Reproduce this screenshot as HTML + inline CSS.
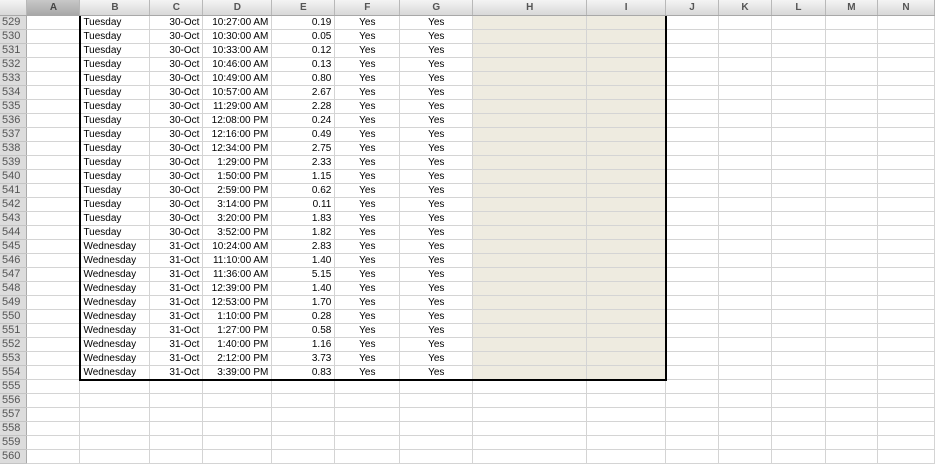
<!DOCTYPE html><html><head><style>
body{margin:0;width:935px;height:461px;overflow:hidden;background:#fff;font-family:"Liberation Sans",sans-serif;font-size:10px;position:relative}
table{border-collapse:collapse;table-layout:fixed;position:absolute;left:0;top:0}
td{height:13px;padding:0 3px;border-right:1px solid #d4d4d4;border-bottom:1px solid #d4d4d4;white-space:nowrap;overflow:hidden;line-height:13px;color:#000}
tr.h td{height:15px;background:linear-gradient(#f4f4f4,#d8d8d8);text-align:center;color:#555;font-weight:bold;border-right:1px solid #b8b8b8;border-bottom:1px solid #a8a8a8}
td.r{background:#dcdcdc;color:#555;font-size:11px;padding:0 2px;border-bottom:1px solid #c4c4c4;border-right:1px solid #aaa}
td:nth-child(4),td:nth-child(5),td:nth-child(6){text-align:right}
td:nth-child(7),td:nth-child(8){text-align:center}
td.s{background:#eeebe0}
#box{position:absolute;left:79px;top:16px;width:584px;height:363px;border:2px solid #000;border-top:none}
</style></head><body>
<table>
<colgroup><col style="width:27px"><col style="width:53px"><col style="width:70px"><col style="width:53px"><col style="width:69px"><col style="width:63px"><col style="width:65px"><col style="width:73px"><col style="width:114px"><col style="width:79px"><col style="width:53px"><col style="width:53px"><col style="width:54px"><col style="width:52px"><col style="width:57px"></colgroup>
<tr class="h"><td></td><td style="background:linear-gradient(#c8c8c8,#a8a8a8);color:#444">A</td><td>B</td><td>C</td><td>D</td><td>E</td><td>F</td><td>G</td><td>H</td><td>I</td><td>J</td><td>K</td><td>L</td><td>M</td><td>N</td></tr>
<tr><td class="r">529</td><td></td><td>Tuesday</td><td>30-Oct</td><td>10:27:00 AM</td><td>0.19</td><td>Yes</td><td>Yes</td><td class="s"></td><td class="s"></td><td></td><td></td><td></td><td></td><td></td></tr>
<tr><td class="r">530</td><td></td><td>Tuesday</td><td>30-Oct</td><td>10:30:00 AM</td><td>0.05</td><td>Yes</td><td>Yes</td><td class="s"></td><td class="s"></td><td></td><td></td><td></td><td></td><td></td></tr>
<tr><td class="r">531</td><td></td><td>Tuesday</td><td>30-Oct</td><td>10:33:00 AM</td><td>0.12</td><td>Yes</td><td>Yes</td><td class="s"></td><td class="s"></td><td></td><td></td><td></td><td></td><td></td></tr>
<tr><td class="r">532</td><td></td><td>Tuesday</td><td>30-Oct</td><td>10:46:00 AM</td><td>0.13</td><td>Yes</td><td>Yes</td><td class="s"></td><td class="s"></td><td></td><td></td><td></td><td></td><td></td></tr>
<tr><td class="r">533</td><td></td><td>Tuesday</td><td>30-Oct</td><td>10:49:00 AM</td><td>0.80</td><td>Yes</td><td>Yes</td><td class="s"></td><td class="s"></td><td></td><td></td><td></td><td></td><td></td></tr>
<tr><td class="r">534</td><td></td><td>Tuesday</td><td>30-Oct</td><td>10:57:00 AM</td><td>2.67</td><td>Yes</td><td>Yes</td><td class="s"></td><td class="s"></td><td></td><td></td><td></td><td></td><td></td></tr>
<tr><td class="r">535</td><td></td><td>Tuesday</td><td>30-Oct</td><td>11:29:00 AM</td><td>2.28</td><td>Yes</td><td>Yes</td><td class="s"></td><td class="s"></td><td></td><td></td><td></td><td></td><td></td></tr>
<tr><td class="r">536</td><td></td><td>Tuesday</td><td>30-Oct</td><td>12:08:00 PM</td><td>0.24</td><td>Yes</td><td>Yes</td><td class="s"></td><td class="s"></td><td></td><td></td><td></td><td></td><td></td></tr>
<tr><td class="r">537</td><td></td><td>Tuesday</td><td>30-Oct</td><td>12:16:00 PM</td><td>0.49</td><td>Yes</td><td>Yes</td><td class="s"></td><td class="s"></td><td></td><td></td><td></td><td></td><td></td></tr>
<tr><td class="r">538</td><td></td><td>Tuesday</td><td>30-Oct</td><td>12:34:00 PM</td><td>2.75</td><td>Yes</td><td>Yes</td><td class="s"></td><td class="s"></td><td></td><td></td><td></td><td></td><td></td></tr>
<tr><td class="r">539</td><td></td><td>Tuesday</td><td>30-Oct</td><td>1:29:00 PM</td><td>2.33</td><td>Yes</td><td>Yes</td><td class="s"></td><td class="s"></td><td></td><td></td><td></td><td></td><td></td></tr>
<tr><td class="r">540</td><td></td><td>Tuesday</td><td>30-Oct</td><td>1:50:00 PM</td><td>1.15</td><td>Yes</td><td>Yes</td><td class="s"></td><td class="s"></td><td></td><td></td><td></td><td></td><td></td></tr>
<tr><td class="r">541</td><td></td><td>Tuesday</td><td>30-Oct</td><td>2:59:00 PM</td><td>0.62</td><td>Yes</td><td>Yes</td><td class="s"></td><td class="s"></td><td></td><td></td><td></td><td></td><td></td></tr>
<tr><td class="r">542</td><td></td><td>Tuesday</td><td>30-Oct</td><td>3:14:00 PM</td><td>0.11</td><td>Yes</td><td>Yes</td><td class="s"></td><td class="s"></td><td></td><td></td><td></td><td></td><td></td></tr>
<tr><td class="r">543</td><td></td><td>Tuesday</td><td>30-Oct</td><td>3:20:00 PM</td><td>1.83</td><td>Yes</td><td>Yes</td><td class="s"></td><td class="s"></td><td></td><td></td><td></td><td></td><td></td></tr>
<tr><td class="r">544</td><td></td><td>Tuesday</td><td>30-Oct</td><td>3:52:00 PM</td><td>1.82</td><td>Yes</td><td>Yes</td><td class="s"></td><td class="s"></td><td></td><td></td><td></td><td></td><td></td></tr>
<tr><td class="r">545</td><td></td><td>Wednesday</td><td>31-Oct</td><td>10:24:00 AM</td><td>2.83</td><td>Yes</td><td>Yes</td><td class="s"></td><td class="s"></td><td></td><td></td><td></td><td></td><td></td></tr>
<tr><td class="r">546</td><td></td><td>Wednesday</td><td>31-Oct</td><td>11:10:00 AM</td><td>1.40</td><td>Yes</td><td>Yes</td><td class="s"></td><td class="s"></td><td></td><td></td><td></td><td></td><td></td></tr>
<tr><td class="r">547</td><td></td><td>Wednesday</td><td>31-Oct</td><td>11:36:00 AM</td><td>5.15</td><td>Yes</td><td>Yes</td><td class="s"></td><td class="s"></td><td></td><td></td><td></td><td></td><td></td></tr>
<tr><td class="r">548</td><td></td><td>Wednesday</td><td>31-Oct</td><td>12:39:00 PM</td><td>1.40</td><td>Yes</td><td>Yes</td><td class="s"></td><td class="s"></td><td></td><td></td><td></td><td></td><td></td></tr>
<tr><td class="r">549</td><td></td><td>Wednesday</td><td>31-Oct</td><td>12:53:00 PM</td><td>1.70</td><td>Yes</td><td>Yes</td><td class="s"></td><td class="s"></td><td></td><td></td><td></td><td></td><td></td></tr>
<tr><td class="r">550</td><td></td><td>Wednesday</td><td>31-Oct</td><td>1:10:00 PM</td><td>0.28</td><td>Yes</td><td>Yes</td><td class="s"></td><td class="s"></td><td></td><td></td><td></td><td></td><td></td></tr>
<tr><td class="r">551</td><td></td><td>Wednesday</td><td>31-Oct</td><td>1:27:00 PM</td><td>0.58</td><td>Yes</td><td>Yes</td><td class="s"></td><td class="s"></td><td></td><td></td><td></td><td></td><td></td></tr>
<tr><td class="r">552</td><td></td><td>Wednesday</td><td>31-Oct</td><td>1:40:00 PM</td><td>1.16</td><td>Yes</td><td>Yes</td><td class="s"></td><td class="s"></td><td></td><td></td><td></td><td></td><td></td></tr>
<tr><td class="r">553</td><td></td><td>Wednesday</td><td>31-Oct</td><td>2:12:00 PM</td><td>3.73</td><td>Yes</td><td>Yes</td><td class="s"></td><td class="s"></td><td></td><td></td><td></td><td></td><td></td></tr>
<tr><td class="r">554</td><td></td><td>Wednesday</td><td>31-Oct</td><td>3:39:00 PM</td><td>0.83</td><td>Yes</td><td>Yes</td><td class="s"></td><td class="s"></td><td></td><td></td><td></td><td></td><td></td></tr>
<tr><td class="r">555</td><td></td><td></td><td></td><td></td><td></td><td></td><td></td><td></td><td></td><td></td><td></td><td></td><td></td><td></td></tr>
<tr><td class="r">556</td><td></td><td></td><td></td><td></td><td></td><td></td><td></td><td></td><td></td><td></td><td></td><td></td><td></td><td></td></tr>
<tr><td class="r">557</td><td></td><td></td><td></td><td></td><td></td><td></td><td></td><td></td><td></td><td></td><td></td><td></td><td></td><td></td></tr>
<tr><td class="r">558</td><td></td><td></td><td></td><td></td><td></td><td></td><td></td><td></td><td></td><td></td><td></td><td></td><td></td><td></td></tr>
<tr><td class="r">559</td><td></td><td></td><td></td><td></td><td></td><td></td><td></td><td></td><td></td><td></td><td></td><td></td><td></td><td></td></tr>
<tr><td class="r">560</td><td></td><td></td><td></td><td></td><td></td><td></td><td></td><td></td><td></td><td></td><td></td><td></td><td></td><td></td></tr>
</table>
<div id="box"></div>
</body></html>
